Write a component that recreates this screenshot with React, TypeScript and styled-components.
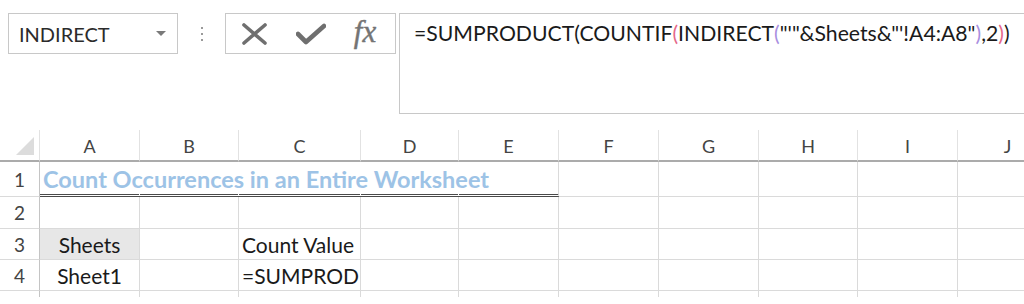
import React from 'react';
import styled, { createGlobalStyle } from 'styled-components';

const Global = createGlobalStyle`
  html, body { margin: 0; padding: 0; background: #fff; }
  body { font-family: Lato, "Open Sans", sans-serif; color: #1a1a1a; }
  * { box-sizing: border-box; }
`;

const Page = styled.div`
  width: 1024px;
  height: 304px;
  overflow: hidden;
  display: flex;
  flex-direction: column;
  background: #fff;
`;

const Toolbar = styled.div`
  display: flex;
  align-items: flex-start;
  padding: 13px 0 0 8px;
  height: 114px;
  flex: none;
`;

const NameBox = styled.div`
  width: 170px;
  height: 41px;
  border: 1px solid #c8c8c8;
  display: flex;
  align-items: center;
  justify-content: space-between;
  padding: 0 10px 0 10px;
  font-size: 20px;
  color: #2b2b2b;
`;

const DropArrow = styled.span`
  width: 0;
  height: 0;
  border-left: 5px solid transparent;
  border-right: 5px solid transparent;
  border-top: 5px solid #7a7a7a;
  margin-right: 1px;
`;

const Separator = styled.div`
  width: 47px;
  height: 41px;
  display: flex;
  flex-direction: column;
  align-items: center;
  justify-content: center;
  gap: 4px;
`;

const Dot = styled.span`
  width: 2px;
  height: 2px;
  background: #9a9a9a;
`;

const FuncBox = styled.div`
  width: 171px;
  height: 41px;
  border: 1px solid #c8c8c8;
  display: flex;
  align-items: center;
  padding-left: 15px;
`;

const IconSlot = styled.div<{ $w: number; $gap: number }>`
  width: ${(p) => p.$w}px;
  margin-right: ${(p) => p.$gap}px;
  display: flex;
  align-items: center;
  justify-content: center;
`;

const Fx = styled.span`
  font-family: "Liberation Serif", "DejaVu Serif", serif;
  font-style: italic;
  font-size: 31px;
  color: #747474;
  letter-spacing: 0px;
  line-height: 1;
  margin-top: -4px;
  -webkit-text-stroke: 0.4px #747474;
`;

const FormulaBox = styled.div`
  flex: 1;
  margin-left: 3px;
  height: 101px;
  border: 1px solid #c8c8c8;
  border-right: none;
  padding: 6px 0 0 14px;
  font-size: 21.2px;
  line-height: 26px;
  color: #1a1a1a;
  white-space: nowrap;
`;

const Paren = styled.span<{ $c: string }>`
  color: ${(p) => p.$c};
`;

const Sheet = styled.div`
  margin-top: 16px;
  display: flex;
  flex-direction: column;
  flex: 1;
  overflow: hidden;
`;

const Row = styled.div<{ $h: number }>`
  display: flex;
  height: ${(p) => p.$h}px;
  flex: none;
`;

const HeaderCell = styled.div<{ $w: number }>`
  width: ${(p) => p.$w}px;
  flex: none;
  border-right: 1px solid #e2e2e2;
  border-bottom: 2px solid #ababab;
  display: flex;
  align-items: center;
  justify-content: center;
  font-size: 18px;
  color: #444;
  padding-top: 1px;
`;

const Corner = styled.div`
  width: 40px;
  flex: none;
  border-right: 1px solid #e2e2e2;
  border-bottom: 2px solid #ababab;
  position: relative;
`;

const CornerTriangle = styled.span`
  position: absolute;
  left: 16px;
  top: 7px;
  width: 0;
  height: 0;
  border-left: 18px solid transparent;
  border-bottom: 18px solid #dcdcdc;
`;

const RowNum = styled.div<{ $bottom?: boolean }>`
  width: 40px;
  flex: none;
  border-right: 1px solid #c4c4c4;
  border-bottom: ${(p) => (p.$bottom === false ? 'none' : '1px solid #dadada')};
  display: flex;
  align-items: center;
  justify-content: center;
  font-size: 19px;
  color: #444;
`;

const Cell = styled.div<{
  $w: number;
  $noRight?: boolean;
  $double?: boolean;
  $bg?: string;
  $center?: boolean;
  $noBottom?: boolean;
}>`
  width: ${(p) => p.$w}px;
  flex: none;
  border-right: ${(p) => (p.$noRight ? '1px solid transparent' : '1px solid #dadada')};
  border-bottom: ${(p) =>
    p.$noBottom ? 'none' : p.$double ? '3px double #4a4a4a' : '1px solid #dadada'};
  background: ${(p) => p.$bg || 'transparent'};
  display: flex;
  align-items: center;
  justify-content: ${(p) => (p.$center ? 'center' : 'flex-start')};
  padding: 0 3px;
  font-size: 21px;
  color: #1a1a1a;
  white-space: nowrap;
  overflow: hidden;
`;

const TitleCell = styled(Cell)`
  overflow: visible;
  position: relative;
  z-index: 1;
`;

const Title = styled.span`
  font-weight: 700;
  font-size: 23.5px;
  color: #9dc3e6;
  padding-top: 2px;
`;

const COLS = [
  { k: 'A', w: 100 },
  { k: 'B', w: 99 },
  { k: 'C', w: 122 },
  { k: 'D', w: 98 },
  { k: 'E', w: 100 },
  { k: 'F', w: 100 },
  { k: 'G', w: 100 },
  { k: 'H', w: 99 },
  { k: 'I', w: 100 },
  { k: 'J', w: 100 },
];

const RED = '#e5698a';
const PURPLE = '#a98fe0';

const XIcon = () => (
  <svg width="27" height="24" viewBox="0 0 27 24">
    <path d="M3 3 L24 21 M24 3 L3 21" stroke="#6f6f6f" strokeWidth="3.6" strokeLinecap="round" fill="none" />
  </svg>
);

const CheckIcon = () => (
  <svg width="30" height="24" viewBox="0 0 30 24">
    <path d="M2 12 L10 20 L28 4" stroke="#6f6f6f" strokeWidth="4.6" strokeLinejoin="round" strokeLinecap="round" fill="none" />
  </svg>
);

export default function App() {
  const rows: Array<{ n: string; h: number; cells: Record<string, React.ReactNode> }> = [
    { n: '2', h: 32, cells: {} },
    { n: '3', h: 31, cells: { A: 'Sheets', C: 'Count Value' } },
    { n: '4', h: 31, cells: { A: 'Sheet1', C: '=SUMPRODUCT(COUNTIF(INDIRECT("\'"&Sheets&"\'!A4:A8"),2))' } },
  ];

  return (
    <Page>
      <Global />
      <Toolbar>
        <NameBox>
          <span>INDIRECT</span>
          <DropArrow />
        </NameBox>
        <Separator>
          <Dot />
          <Dot />
          <Dot />
        </Separator>
        <FuncBox>
          <IconSlot $w={27} $gap={28}>
            <XIcon />
          </IconSlot>
          <IconSlot $w={30} $gap={24}>
            <CheckIcon />
          </IconSlot>
          <IconSlot $w={30} $gap={0}>
            <Fx>fx</Fx>
          </IconSlot>
        </FuncBox>
        <FormulaBox>
          =SUMPRODUCT(COUNTIF<Paren $c={RED}>(</Paren>INDIRECT<Paren $c={PURPLE}>(</Paren>
          {'"\'"&Sheets&"\'!A4:A8"'}
          <Paren $c={PURPLE}>)</Paren>,2<Paren $c={RED}>)</Paren>)
        </FormulaBox>
      </Toolbar>
      <Sheet>
        <Row $h={32}>
          <Corner>
            <CornerTriangle />
          </Corner>
          {COLS.map((c) => (
            <HeaderCell key={c.k} $w={c.w}>
              {c.k}
            </HeaderCell>
          ))}
        </Row>
        <Row $h={35}>
          <RowNum>1</RowNum>
          {COLS.map((c, i) =>
            i === 0 ? (
              <TitleCell key={c.k} $w={c.w} $noRight $double>
                <Title>Count Occurrences in an Entire Worksheet</Title>
              </TitleCell>
            ) : (
              <Cell key={c.k} $w={c.w} $noRight={i < 4} $double={i < 5} />
            )
          )}
        </Row>
        {rows.map((r) => (
          <Row key={r.n} $h={r.h}>
            <RowNum>{r.n}</RowNum>
            {COLS.map((c) => (
              <Cell
                key={c.k}
                $w={c.w}
                $center={c.k === 'A'}
                $bg={r.n === '3' && c.k === 'A' ? '#e7e7e7' : undefined}
              >
                {r.cells[c.k]}
              </Cell>
            ))}
          </Row>
        ))}
        <Row $h={6}>
          <RowNum $bottom={false} />
          {COLS.map((c) => (
            <Cell key={c.k} $w={c.w} $noBottom />
          ))}
        </Row>
      </Sheet>
    </Page>
  );
}
